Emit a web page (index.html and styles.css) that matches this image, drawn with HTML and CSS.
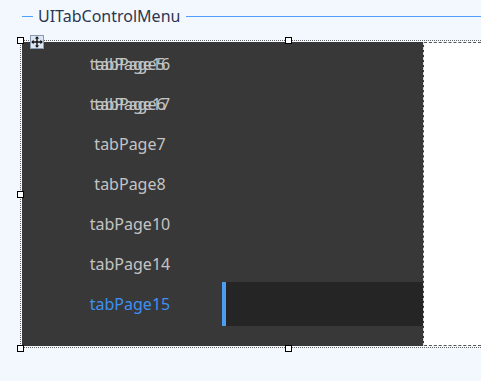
FILE: index.html
```html
<!DOCTYPE html>
<html lang="en">
<head>
    <meta charset="UTF-8">
    <title>UITabControlMenu</title>
    <link rel="stylesheet" href="styles.css">
</head>
<body>
<div class="group-title">
    <span class="rule short"></span>
    <span class="caption">UITabControlMenu</span>
    <span class="rule long"></span>
</div>

<div class="designer">
    <!-- selection grips -->
    <span class="grip g-tl"></span>
    <span class="grip g-tm"></span>
    <span class="grip g-ml"></span>
    <span class="grip g-bl"></span>
    <span class="grip g-bm"></span>
    <span class="mover">
        <svg width="14" height="14" viewBox="0 0 14 14">
            <rect x="0.5" y="0.5" width="13" height="13" fill="#dce6f4" stroke="#8a9ab0"/>
            <path d="M7 2v10M2 7h10" stroke="#111" stroke-width="1.4"/>
            <path d="M7 1.2l2.2 2.4H4.8zM7 12.8l2.2-2.4H4.8zM1.2 7l2.4-2.2v4.4zM12.8 7l-2.4-2.2v4.4z" fill="#111"/>
        </svg>
    </span>

    <div class="control">
        <div class="menu">
            <div class="item">
                <span class="label"><span class="stack">tabPage5</span><span class="stack">tabPage16</span></span>
                <span class="mark"></span>
            </div>
            <div class="item">
                <span class="label"><span class="stack">tabPage6</span><span class="stack">tabPage17</span></span>
                <span class="mark"></span>
            </div>
            <div class="item">
                <span class="label">tabPage7</span>
                <span class="mark"></span>
            </div>
            <div class="item">
                <span class="label">tabPage8</span>
                <span class="mark"></span>
            </div>
            <div class="item">
                <span class="label">tabPage10</span>
                <span class="mark"></span>
            </div>
            <div class="item">
                <span class="label">tabPage14</span>
                <span class="mark"></span>
            </div>
            <div class="item selected">
                <span class="label">tabPage15</span>
                <span class="mark"></span>
            </div>
        </div>
        <div class="blank"></div>
    </div>
</div>
</body>
</html>
```

FILE: styles.css
```css
html, body {
    min-height: 100vh;
}

body {
    margin: 0;
    background: #f3f8ff;
    font-family: "Noto Sans", "DejaVu Sans", sans-serif;
}

.group-title {
    display: flex;
    align-items: center;
    height: 32px;
    padding-left: 22px;
}

.rule {
    height: 1px;
    background: #50a0ff;
}

.rule.short {
    width: 11px;
}

.rule.long {
    flex: 1;
}

.caption {
    font-size: 16px;
    color: #2c3650;
    padding: 0 6px 0 5px;
    line-height: 20px;
}

/* zone du designer */
.designer {
    position: relative;
    margin: 8px 0 0 20px;
    border-top: 1px dotted #666;
    border-left: 1px dotted #666;
    border-bottom: 1px dotted #666;
    padding: 1px 0 1px 1px;
}

.control {
    display: flex;
    height: 304px;
}

.menu {
    width: 402px;
    background: #383838;
    border-right: 1px dashed #ddd;
    padding-top: 2px;
    box-sizing: border-box;
}

.item {
    display: flex;
    height: 40px;
}

.label {
    width: 200px;
    padding-left: 16px;
    box-sizing: border-box;
    display: grid;
    place-items: center;
    font-size: 16px;
    color: #c4c4c4;
}

.stack {
    grid-area: 1 / 1;
}

.mark {
    flex: 1;
}

.selected .label {
    color: #3f90f2;
}

.selected .mark {
    background: #252525;
    border-left: 4px solid #4a9cf5;
    margin: -2px 0;
}

.blank {
    flex: 1;
    background: #fff;
    border-top: 1px dashed #555;
    border-bottom: 1px dashed #555;
}

.grip {
    position: absolute;
    width: 5px;
    height: 5px;
    background: #fff;
    border: 1px solid #000;
    z-index: 2;
}

.g-tl { left: -4px; top: -4px; }
.g-tm { left: 264px; top: -4px; }
.g-ml { left: -4px; top: 150px; }
.g-bl { left: -4px; top: 304px; }
.g-bm { left: 264px; top: 304px; }

.mover {
    position: absolute;
    left: 9px;
    top: -6px;
    width: 14px;
    height: 14px;
    z-index: 2;
}

.mover svg {
    display: block;
}
```
